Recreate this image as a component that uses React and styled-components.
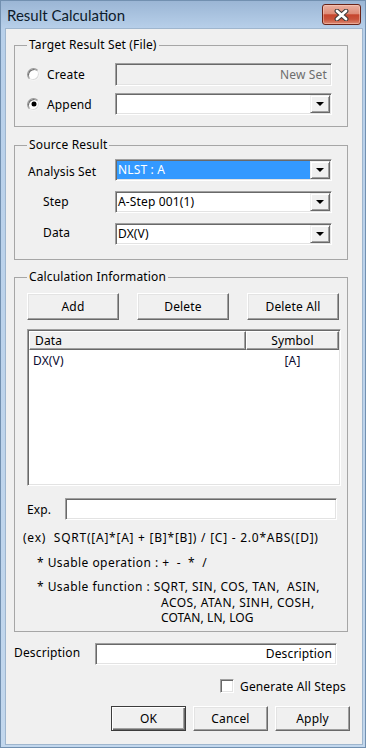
import React from "react";
import styled, { createGlobalStyle, css } from "styled-components";

const UI = `"Noto Sans", "Liberation Sans", Arial, sans-serif`;

const Global = createGlobalStyle`
  html, body { margin: 0; padding: 0; background: #bcd3ea; }
  body { font-family: ${UI}; font-size: 12px; letter-spacing: 0.15px; color: #000; }
  *, *::before, *::after { box-sizing: border-box; }
`;

const sunken = css`
  border: 1px solid;
  border-color: #a0a0a0 #ffffff #ffffff #a0a0a0;
  box-shadow: inset 1px 1px 0 #696969, inset -1px -1px 0 #e3e3e3;
  padding: 1px;
`;

const raised = css`
  border: 1px solid;
  border-color: #ffffff #696969 #696969 #ffffff;
  box-shadow: inset -1px -1px 0 #a0a0a0, inset 1px 1px 0 #e3e3e3;
`;

const Window = styled.div`
  width: 366px;
  height: 748px;
  display: flex;
  flex-direction: column;
  background: linear-gradient(to bottom, #9ab5d4 0px, #b8d0ea 29px, #c2d7ed 100%);
  box-shadow: inset 0 0 0 1px #7290b0;
  overflow: hidden;
`;

const TitleBar = styled.div`
  height: 29px;
  flex: none;
  display: flex;
  align-items: flex-start;
  justify-content: space-between;
  padding: 0 5px 0 7px;
`;

const Title = styled.div`
  font-family: "Lato", "Noto Sans", sans-serif;
  font-size: 15px;
  letter-spacing: 0;
  line-height: 30px;
  color: #0d1b2b;
`;

const CloseButton = styled.div`
  margin-top: 4px;
  width: 39px;
  height: 21px;
  border: 1px solid #6a2418;
  border-radius: 3px;
  background: linear-gradient(
    to bottom,
    #eab0a0 0%,
    #de8d79 45%,
    #c6462e 52%,
    #c9533b 75%,
    #dc8a73 100%
  );
  box-shadow: inset 0 0 0 1px rgba(255, 215, 200, 0.45);
  display: flex;
  align-items: center;
  justify-content: center;
`;

const Body = styled.div`
  flex: 1;
  margin: 0 4px 4px 6px;
  background: #f0f0f0;
  padding: 9px 12px 0 8px;
  display: flex;
  flex-direction: column;
  box-shadow: 0 0 0 1px #9fb6ce;
`;

const Group = styled.fieldset`
  margin: 0 2px ${(p) => p.$after}px 0;
  padding: ${(p) => p.$pad};
  border: 1px solid #a6a6a6;
  min-width: 0;
`;

const Legend = styled.legend`
  padding: 0 2px;
  margin: 0;
  line-height: 14px;
  font-size: 12px;
`;

const FormGrid = styled.div`
  display: grid;
  grid-template-columns: 88px 217px;
  row-gap: ${(p) => p.$gap}px;
  align-items: center;
`;

const RadioLabel = styled.label`
  display: flex;
  align-items: center;
  gap: 7px;
  height: 22px;
`;

const RadioCircle = styled.span`
  position: relative;
  width: 13px;
  height: 13px;
  border-radius: 50%;
  background: #fff;
  border: 1px solid;
  border-color: #9a9a9a #f4f4f4 #f4f4f4 #9a9a9a;
  box-shadow: inset 1px 1px 0 #6f6f6f, inset -1px -1px 0 #dcdcdc;
  ${(p) =>
    p.$checked &&
    css`
      &::after {
        content: "";
        position: absolute;
        left: 3.5px;
        top: 3.5px;
        width: 4px;
        height: 4px;
        border-radius: 50%;
        background: #000;
        box-shadow: 0 0 0 0.5px #000;
      }
    `}
`;

const FieldLabel = styled.span`
  padding-left: ${(p) => p.$indent}px;
  margin-top: ${(p) => p.$nudge || 0}px;
  margin-bottom: ${(p) => -(p.$nudge || 0)}px;
  line-height: 22px;
`;

const TextBox = styled.div`
  ${sunken};
  height: ${(p) => p.$h || 22}px;
  background: ${(p) => (p.$disabled ? "#f0f0f0" : "#ffffff")};
  color: ${(p) => (p.$disabled ? "#6d6d6d" : "#000")};
  text-align: ${(p) => p.$align || "left"};
  padding: 0 4px;
  line-height: ${(p) => (p.$h || 22) - 2}px;
  white-space: nowrap;
`;

const ComboBox = styled.div`
  ${sunken};
  height: 22px;
  background: #fff;
  display: flex;
`;

const ComboText = styled.div`
  flex: 1;
  padding-left: 1px;
  line-height: 18px;
  background: ${(p) => (p.$selected ? "#3399ff" : "transparent")};
  color: ${(p) => (p.$selected ? "#fff" : "#000")};
  white-space: nowrap;
`;

const ComboArrow = styled.div`
  width: 20px;
  flex: none;
  background: #f0f0f0;
  display: flex;
  align-items: center;
  justify-content: center;
  border: 1px solid;
  border-color: #f0f0f0 #696969 #696969 #f0f0f0;
  box-shadow: inset 1px 1px 0 #ffffff, inset -1px -1px 0 #a0a0a0;
`;

const Column = styled.div`
  display: flex;
  flex-direction: column;
`;

const ButtonRow = styled.div`
  display: flex;
  gap: ${(p) => p.$gap}px;
  justify-content: ${(p) => p.$justify || "flex-start"};
  margin-top: ${(p) => p.$top || 0}px;
`;

const Button = styled.button`
  font: inherit;
  letter-spacing: inherit;
  color: #000;
  width: ${(p) => p.$w}px;
  height: ${(p) => p.$h}px;
  padding: 0;
  background: #f0f0f0;
  ${raised};
  ${(p) =>
    p.$default &&
    css`
      border-color: #3c3c3c;
      box-shadow: inset 1px 1px 0 #ffffff, inset -1px -1px 0 #696969,
        inset -2px -2px 0 #a0a0a0;
    `}
`;

const ListBox = styled.div`
  ${sunken};
  margin-top: 9px;
  width: 314px;
  height: 157px;
  background: #fff;
`;

const ListHead = styled.div`
  display: flex;
  height: 19px;
`;

const HeadCell = styled.div`
  width: ${(p) => (p.$w ? `${p.$w}px` : "auto")};
  flex: ${(p) => (p.$w ? "none" : 1)};
  background: #f0f0f0;
  border: 1px solid;
  border-color: #ffffff #696969 #696969 #ffffff;
  box-shadow: inset -1px -1px 0 #a0a0a0;
  padding-left: ${(p) => (p.$center ? 0 : 5)}px;
  text-align: ${(p) => (p.$center ? "center" : "left")};
  line-height: 17px;
`;

const ListRow = styled.div`
  display: flex;
  padding-top: 3px;
  line-height: 16px;
`;

const Cell = styled.div`
  width: ${(p) => (p.$w ? `${p.$w}px` : "auto")};
  flex: ${(p) => (p.$w ? "none" : 1)};
  padding-left: ${(p) => (p.$center ? 0 : 4)}px;
  text-align: ${(p) => (p.$center ? "center" : "left")};
  color: #0a0a30;
`;

const ExpRow = styled.div`
  display: grid;
  grid-template-columns: 38px 272px;
  align-items: center;
  margin-top: 12px;
`;

const Line = styled.div`
  margin-top: ${(p) => p.$top || 0}px;
  margin-left: ${(p) => p.$left || 0}px;
  line-height: ${(p) => p.$lh || 14}px;
  letter-spacing: ${(p) => p.$ls || 0.45}px;
  white-space: pre;
`;

const DescRow = styled.div`
  display: grid;
  grid-template-columns: 81px 242px;
  align-items: center;
`;

const DescLabel = styled.span`
  margin: -2px 0 2px;
`;

const CheckRow = styled.label`
  display: flex;
  align-items: center;
  gap: 6px;
  margin: 14px 0 0 206px;
  height: 14px;
`;

const CheckBox = styled.span`
  width: 14px;
  height: 14px;
  background: #fff;
  ${sunken};
`;

function Arrow() {
  return (
    <svg width="8" height="4" viewBox="0 0 8 4">
      <path d="M0 0H8L4 4Z" fill="#000" />
    </svg>
  );
}

function CloseX() {
  return (
    <svg width="15" height="12" viewBox="0 0 15 12">
      <path
        d="M3 2L12 10M12 2L3 10"
        stroke="#3a3a3a"
        strokeWidth="4.8"
        strokeLinecap="round"
        fill="none"
      />
      <path
        d="M3 2L12 10M12 2L3 10"
        stroke="#ffffff"
        strokeWidth="2.8"
        strokeLinecap="round"
        fill="none"
      />
    </svg>
  );
}

function Combo({ value, selected }) {
  return (
    <ComboBox>
      <ComboText $selected={selected}>{value}</ComboText>
      <ComboArrow>
        <Arrow />
      </ComboArrow>
    </ComboBox>
  );
}

export default function App() {
  return (
    <>
      <Global />
      <Window>
        <TitleBar>
          <Title>Result Calculation</Title>
          <CloseButton>
            <CloseX />
          </CloseButton>
        </TitleBar>
        <Body>
          <Group $after={11} $pad="11px 15px 11px 12px">
            <Legend>Target Result Set (File)</Legend>
            <FormGrid $gap={7}>
              <RadioLabel>
                <RadioCircle />
                Create
              </RadioLabel>
              <TextBox $h={23} $disabled $align="right">
                New Set
              </TextBox>
              <RadioLabel>
                <RadioCircle $checked />
                Append
              </RadioLabel>
              <Combo value="" />
            </FormGrid>
          </Group>

          <Group $after={10} $pad="7px 15px 14px 12px">
            <Legend>Source Result</Legend>
            <FormGrid $gap={10}>
              <FieldLabel $indent={1} $nudge={2}>Analysis Set</FieldLabel>
              <Combo value="NLST : A" selected />
              <FieldLabel $indent={16}>Step</FieldLabel>
              <Combo value="A-Step 001(1)" />
              <FieldLabel $indent={16} $nudge={-1}>Data</FieldLabel>
              <Combo value="DX(V)" />
            </FormGrid>
          </Group>

          <Group $after={11} $pad="9px 6px 6px 12px">
            <Legend>Calculation Information</Legend>
            <Column>
              <ButtonRow $gap={18}>
                <Button $w={92} $h={27}>Add</Button>
                <Button $w={92} $h={27}>Delete</Button>
                <Button $w={92} $h={27}>Delete All</Button>
              </ButtonRow>
              <ListBox>
                <ListHead>
                  <HeadCell $w={217}>Data</HeadCell>
                  <HeadCell $center>Symbol</HeadCell>
                </ListHead>
                <ListRow>
                  <Cell $w={217}>DX(V)</Cell>
                  <Cell $center>[A]</Cell>
                </ListRow>
              </ListBox>
              <ExpRow>
                <span>Exp.</span>
                <TextBox />
              </ExpRow>
              <Line $top={11} $left={-4} $ls={0.75}>
                {"(ex)  SQRT([A]*[A] + [B]*[B]) / [C] - 2.0*ABS([D])"}
              </Line>
              <Line $top={11} $left={10}>
                {"* Usable operation : +  -  *  /"}
              </Line>
              <Line $top={9} $left={10} $lh={15.5}>
                {"* Usable function : SQRT, SIN, COS, TAN,  ASIN,"}
              </Line>
              <Line $left={134} $lh={15.5}>
                {"ACOS, ATAN, SINH, COSH,"}
              </Line>
              <Line $left={134} $lh={15} $ls={0.1}>
                {"COTAN, LN, LOG"}
              </Line>
            </Column>
          </Group>

          <DescRow>
            <DescLabel>Description</DescLabel>
            <TextBox $align="right">Description</TextBox>
          </DescRow>

          <CheckRow>
            <CheckBox />
            Generate All Steps
          </CheckRow>

          <ButtonRow $gap={7} $justify="flex-end" $top={13}>
            <Button $w={75} $h={25} $default>OK</Button>
            <Button $w={75} $h={25}>Cancel</Button>
            <Button $w={75} $h={25}>Apply</Button>
          </ButtonRow>
        </Body>
      </Window>
    </>
  );
}
